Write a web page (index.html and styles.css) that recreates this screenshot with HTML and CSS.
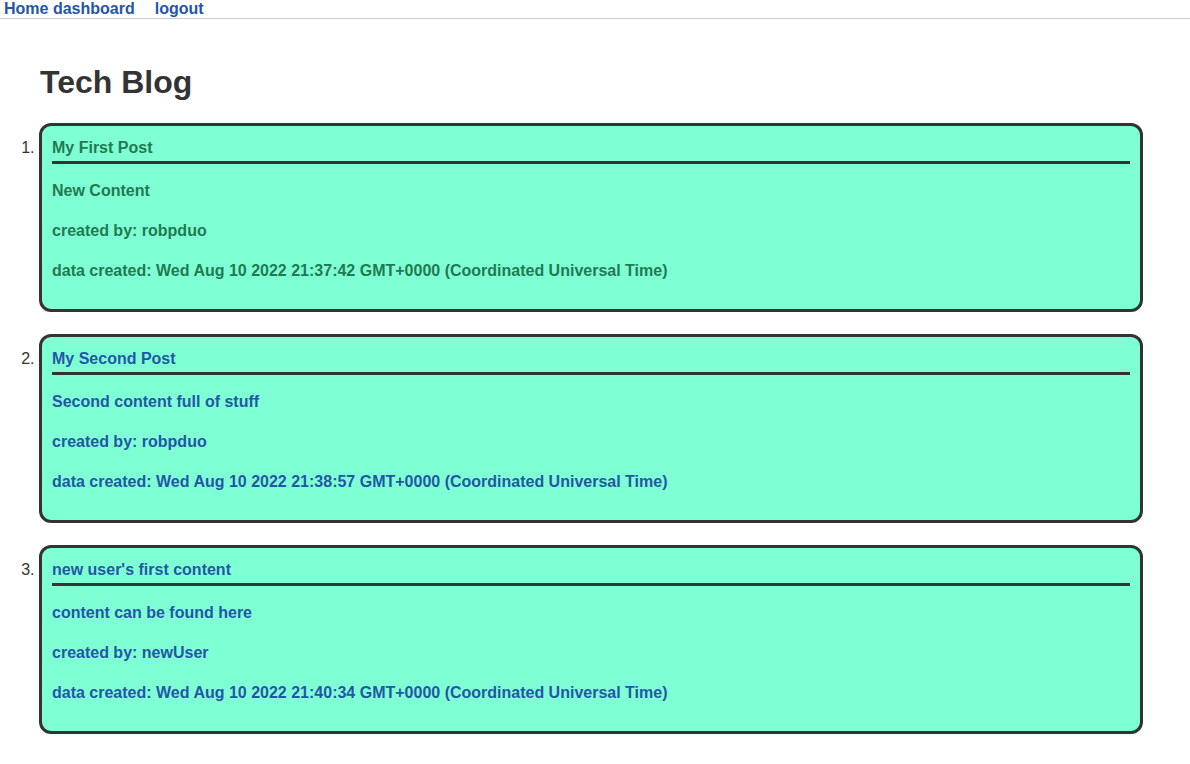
FILE: index.html
```html
<!DOCTYPE html>
<html lang="en">
<head>
    <meta charset="UTF-8">
    <meta name="viewport" content="width=device-width, initial-scale=1.0">
    <title>Tech Blog</title>
    <link rel="stylesheet" href="styles.css">
</head>
<body>
    <nav class="topnav">
        <a href="#">Home dashboard</a>
        <a href="#">logout</a>
    </nav>

    <main class="blog">
        <h1>Tech Blog</h1>
        <ol class="posts">
            <li>
                <a class="post visited" href="#">
                    <h3 class="post-title">My First Post</h3>
                    <p>New Content</p>
                    <p>created by: robpduo</p>
                    <p>data created: Wed Aug 10 2022 21:37:42 GMT+0000 (Coordinated Universal Time)</p>
                </a>
            </li>
            <li>
                <a class="post" href="#">
                    <h3 class="post-title">My Second Post</h3>
                    <p>Second content full of stuff</p>
                    <p>created by: robpduo</p>
                    <p>data created: Wed Aug 10 2022 21:38:57 GMT+0000 (Coordinated Universal Time)</p>
                </a>
            </li>
            <li>
                <a class="post" href="#">
                    <h3 class="post-title">new user's first content</h3>
                    <p>content can be found here</p>
                    <p>created by: newUser</p>
                    <p>data created: Wed Aug 10 2022 21:40:34 GMT+0000 (Coordinated Universal Time)</p>
                </a>
            </li>
        </ol>
    </main>
</body>
</html>
```

FILE: styles.css
```css
body {
    margin: 0;
    font-family: "Liberation Sans", Arial, sans-serif;
    color: #333;
    background-color: #fff;
}
.topnav {
    display: flex;
    gap: 20px;
    padding: 0 4px;
    height: 18px;
    border-bottom: 1px solid #ccc;
}
.topnav a {
    font-size: 16px;
    font-weight: bold;
    line-height: 17px;
    color: #2456a8;
    text-decoration: none;
}
.blog {
    padding: 0 47px 20px 0;
}
.blog h1 {
    font-size: 32px;
    line-height: 37px;
    margin: 45px 0 22px 40px;
    color: #333;
}
.posts {
    margin: 0;
    padding-left: 39px;
    font-size: 16px;
}
.posts li {
    margin-bottom: 22px;
}
.posts li::marker {
    color: #333;
}
.post {
    display: flex;
    flex-direction: column;
    gap: 22px;
    padding: 13px 10px 29px;
    background-color: #7fffd4;
    border: 3px solid #333;
    border-radius: 12px;
    text-decoration: none;
    color: #2456a8;
}
.post.visited {
    color: #1f7a52;
}
.post h3,
.post p {
    margin: 0;
    font-size: 16px;
    font-weight: bold;
    line-height: 18px;
}
.post .post-title {
    padding-bottom: 4px;
    border-bottom: 3px solid #333;
    margin-bottom: -4px;
}
```
